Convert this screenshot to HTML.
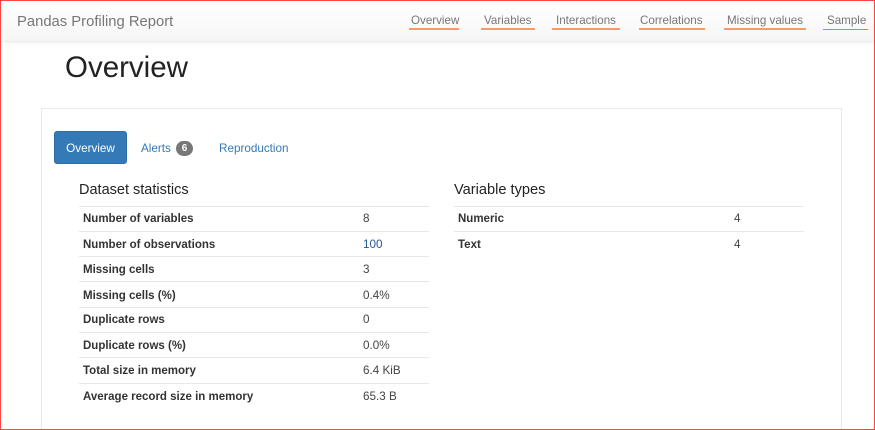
<!DOCTYPE html>
<html><head><meta charset="utf-8">
<style>
html,body{margin:0;padding:0;background:#fff;overflow:hidden;width:875px;height:430px}
body{font-family:"Liberation Sans",sans-serif;font-size:11.7px;color:#333}
#wrap{position:relative;width:875px;height:430px;overflow:hidden}
.a{position:absolute;white-space:nowrap}
#nav{left:4px;top:1px;width:870px;height:40px;background:linear-gradient(to bottom,#fff 0,#f6f6f6 100%);border-bottom:1px solid #ececec;box-shadow:0 1px 4px rgba(0,0,0,.06)}
.n{color:#777;font-size:11.6px;top:14px;line-height:14px}
.u{height:2px;background:#fb9a63;top:28px}
.l{height:1px;background:#e8e8e8}
.k{font-weight:bold;font-size:11.5px;color:#333;line-height:14px}
.v{color:#444;line-height:14px}
#frame{left:0;top:0;width:873px;height:428px;border:1px solid #f44;z-index:5}
</style></head><body><div id="wrap">
<div class="a" id="nav"></div>
<div class="a" style="left:17px;top:14px;font-size:14.8px;line-height:17px;color:#777">Pandas Profiling Report</div>
<div class="a n" style="left:411px">Overview</div><div class="a u" style="left:409px;width:50px"></div>
<div class="a n" style="left:484px">Variables</div><div class="a u" style="left:481px;width:54px"></div>
<div class="a n" style="left:556px">Interactions</div><div class="a u" style="left:552px;width:68px"></div>
<div class="a n" style="left:640px">Correlations</div><div class="a u" style="left:639px;width:66px"></div>
<div class="a n" style="left:727px">Missing values</div><div class="a u" style="left:724px;width:82px"></div>
<div class="a n" style="left:827px">Sample</div><div class="a u" style="left:823px;width:45px;background:#f0784a;height:1px;top:29px"></div>

<div class="a" style="left:65px;top:51px;font-size:29.5px;line-height:34px;color:#222">Overview</div>
<div class="a" style="left:41px;top:108px;width:799px;height:330px;border:1px solid #e9e9e9;background:#fff"></div>

<div class="a" style="left:54px;top:131px;width:71px;height:31px;background:#337ab7;border:1px solid #2e6da4;border-radius:3px;color:#fff;text-align:center;line-height:33px">Overview</div>
<div class="a" style="left:141px;top:142px;line-height:14px;color:#337ab7">Alerts</div>
<div class="a" style="left:176px;top:141px;width:17px;height:15px;border-radius:8px;background:#777;color:#fff;font-size:10px;font-weight:bold;text-align:center;line-height:15px">6</div>
<div class="a" style="left:219px;top:142px;line-height:14px;color:#337ab7">Reproduction</div>

<div class="a" style="left:79px;top:182px;font-size:14.5px;line-height:16px;color:#222">Dataset statistics</div>
<div class="a" style="left:454px;top:182px;font-size:14.6px;line-height:16px;color:#222">Variable types</div>

<div class="a l" style="left:79px;top:206px;width:350px"></div>
<div class="a l" style="left:79px;top:231px;width:350px"></div>
<div class="a l" style="left:79px;top:256px;width:350px"></div>
<div class="a l" style="left:79px;top:281px;width:350px"></div>
<div class="a l" style="left:79px;top:307px;width:350px"></div>
<div class="a l" style="left:79px;top:332px;width:350px"></div>
<div class="a l" style="left:79px;top:357px;width:350px"></div>
<div class="a l" style="left:79px;top:383px;width:350px"></div>

<div class="a k" style="left:83px;top:212px">Number of variables</div><div class="a v" style="left:363px;top:212px">8</div>
<div class="a k" style="left:83px;top:238px">Number of observations</div><div class="a v" style="left:363px;top:238px;color:#2a5a8c">100</div>
<div class="a k" style="left:83px;top:263px">Missing cells</div><div class="a v" style="left:363px;top:263px">3</div>
<div class="a k" style="left:83px;top:289px">Missing cells (%)</div><div class="a v" style="left:363px;top:289px">0.4%</div>
<div class="a k" style="left:83px;top:313px">Duplicate rows</div><div class="a v" style="left:363px;top:313px">0</div>
<div class="a k" style="left:83px;top:339px">Duplicate rows (%)</div><div class="a v" style="left:363px;top:339px">0.0%</div>
<div class="a k" style="left:83px;top:364px">Total size in memory</div><div class="a v" style="left:363px;top:364px">6.4 KiB</div>
<div class="a k" style="left:83px;top:390px">Average record size in memory</div><div class="a v" style="left:363px;top:390px">65.3 B</div>

<div class="a l" style="left:454px;top:206px;width:350px"></div>
<div class="a l" style="left:454px;top:231px;width:350px"></div>
<div class="a k" style="left:458px;top:212px">Numeric</div><div class="a v" style="left:734px;top:212px">4</div>
<div class="a k" style="left:458px;top:238px">Text</div><div class="a v" style="left:734px;top:238px">4</div>

<div class="a" id="frame"></div>
</div></body></html>
